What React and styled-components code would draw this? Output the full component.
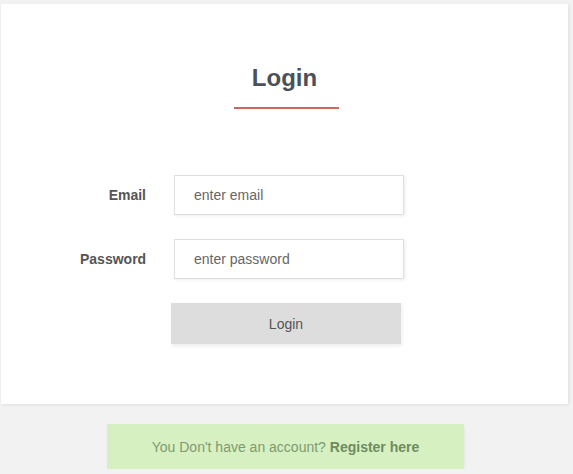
import styled, { createGlobalStyle } from "styled-components";

const GlobalStyle = createGlobalStyle`
  html, body {
    margin: 0;
    padding: 0;
    background: #f2f2f3;
    font-family: "Liberation Sans", Arial, sans-serif;
  }
`;

export default function App() {
  return (
    <>
      <GlobalStyle />
      <Page>
        <Card>
          <Title>Login</Title>
          <Underline />
          <Form onSubmit={e => e.preventDefault()}>
            <Label htmlFor="email">Email</Label>
            <Input id="email" type="email" placeholder="enter email" />
            <Label htmlFor="password">Password</Label>
            <Input id="password" type="password" placeholder="enter password" />
            <span />
            <Button type="submit">Login</Button>
          </Form>
        </Card>
        <Banner>
          You Don't have an account? <RegisterLink href="#">Register here</RegisterLink>
        </Banner>
      </Page>
    </>
  );
}

const Page = styled.div`
  padding: 4px 5px 0 1px;
  display: flex;
  flex-direction: column;
  align-items: center;
`;

const Card = styled.div`
  width: 100%;
  height: 400px;
  box-sizing: border-box;
  background: #ffffff;
  box-shadow: 1px 1px 3px rgba(0, 0, 0, 0.08);
  display: flex;
  flex-direction: column;
  align-items: center;
  padding-top: 60px;
`;

const Title = styled.h1`
  margin: 0;
  font-size: 24px;
  font-weight: 700;
  line-height: 28px;
  color: #4b5159;
`;

const Underline = styled.div`
  width: 105px;
  height: 2px;
  margin-top: 15px;
  margin-left: 3px;
  background: #d0675d;
`;

const Form = styled.form`
  align-self: flex-start;
  margin: 66px 0 0 79px;
  display: grid;
  grid-template-columns: 66px 230px;
  column-gap: 28px;
  row-gap: 24px;
  align-items: center;
`;

const Label = styled.label`
  text-align: right;
  font-size: 14px;
  font-weight: 700;
  color: #555555;
`;

const Input = styled.input`
  height: 40px;
  box-sizing: border-box;
  border: 1px solid #dedede;
  padding: 0 19px;
  font-family: inherit;
  font-size: 14px;
  color: #555;
  outline: none;
  box-shadow: 1px 1px 3px rgba(0, 0, 0, 0.08);
  &::placeholder {
    color: #666666;
  }
`;

const Button = styled.button`
  margin-left: -3px;
  width: 230px;
  height: 41px;
  border: none;
  background: #dddddd;
  color: #555555;
  font-family: inherit;
  font-size: 14px;
  box-shadow: 1px 2px 4px rgba(0, 0, 0, 0.08);
  cursor: pointer;
`;

const Banner = styled.div`
  margin-top: 20px;
  margin-left: 2px;
  width: 357px;
  height: 45px;
  display: flex;
  align-items: center;
  justify-content: center;
  background: #d6f0c2;
  color: #7f9a70;
  font-size: 14px;
  box-shadow: 1px 2px 3px rgba(0, 0, 0, 0.05);
  white-space: pre;
`;

const RegisterLink = styled.a`
  color: #6f8b5f;
  font-weight: 700;
  text-decoration: none;
`;
